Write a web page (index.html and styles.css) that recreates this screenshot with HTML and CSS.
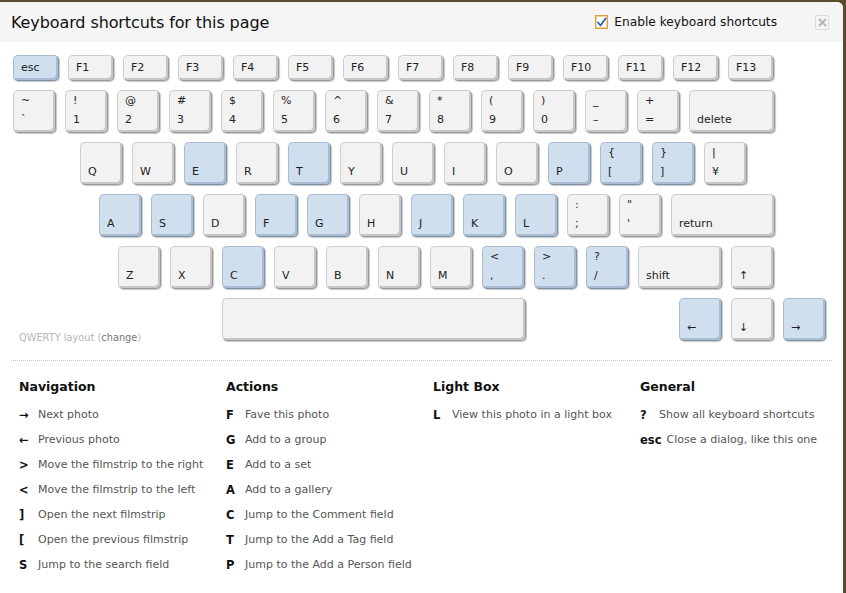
FILE: index.html
```html
<!DOCTYPE html>
<html>
<head>
<meta charset="utf-8">
<title>Keyboard shortcuts</title>
<link rel="stylesheet" href="styles.css">
</head>
<body>
<div class="dialog">
  <div class="header">
    <h1 class="title">Keyboard shortcuts for this page</h1>
    <label class="enable"><span class="checkbox"><svg width="11" height="11" viewBox="0 0 11 11"><path d="M2 5.5 L4.5 8.5 L9.5 1.5" fill="none" stroke="#2f5fb8" stroke-width="1.8" stroke-linecap="round" stroke-linejoin="round"/></svg></span>Enable keyboard shortcuts</label>
    <span class="close"><svg width="9" height="9" viewBox="0 0 9 9"><path d="M1 1 L8 8 M8 1 L1 8" stroke="#b5b5b5" stroke-width="2"/></svg></span>
  </div>

  <div class="keyboard">
    <div class="row row-fn">
      <div class="key fn hl">esc</div>
      <div class="key fn">F1</div>
      <div class="key fn">F2</div>
      <div class="key fn">F3</div>
      <div class="key fn">F4</div>
      <div class="key fn">F5</div>
      <div class="key fn">F6</div>
      <div class="key fn">F7</div>
      <div class="key fn">F8</div>
      <div class="key fn">F9</div>
      <div class="key fn">F10</div>
      <div class="key fn">F11</div>
      <div class="key fn">F12</div>
      <div class="key fn">F13</div>
    </div>
    <div class="row row-num">
      <div class="key"><span>~</span><span>`</span></div>
      <div class="key"><span>!</span><span>1</span></div>
      <div class="key"><span>@</span><span>2</span></div>
      <div class="key"><span>#</span><span>3</span></div>
      <div class="key"><span>$</span><span>4</span></div>
      <div class="key"><span>%</span><span>5</span></div>
      <div class="key"><span>^</span><span>6</span></div>
      <div class="key"><span>&amp;</span><span>7</span></div>
      <div class="key"><span>*</span><span>8</span></div>
      <div class="key"><span>(</span><span>9</span></div>
      <div class="key"><span>)</span><span>0</span></div>
      <div class="key"><span>_</span><span>–</span></div>
      <div class="key"><span>+</span><span>=</span></div>
      <div class="key k-delete"><span>delete</span></div>
    </div>
    <div class="row row-q">
      <div class="key"><span>Q</span></div>
      <div class="key"><span>W</span></div>
      <div class="key hl"><span>E</span></div>
      <div class="key"><span>R</span></div>
      <div class="key hl"><span>T</span></div>
      <div class="key"><span>Y</span></div>
      <div class="key"><span>U</span></div>
      <div class="key"><span>I</span></div>
      <div class="key"><span>O</span></div>
      <div class="key hl"><span>P</span></div>
      <div class="key hl"><span>{</span><span>[</span></div>
      <div class="key hl"><span>}</span><span>]</span></div>
      <div class="key"><span>|</span><span>¥</span></div>
    </div>
    <div class="row row-a">
      <div class="key hl"><span>A</span></div>
      <div class="key hl"><span>S</span></div>
      <div class="key"><span>D</span></div>
      <div class="key hl"><span>F</span></div>
      <div class="key hl"><span>G</span></div>
      <div class="key"><span>H</span></div>
      <div class="key hl"><span>J</span></div>
      <div class="key hl"><span>K</span></div>
      <div class="key hl"><span>L</span></div>
      <div class="key"><span>:</span><span>;</span></div>
      <div class="key"><span>"</span><span>'</span></div>
      <div class="key k-return"><span>return</span></div>
    </div>
    <div class="row row-z">
      <div class="key"><span>Z</span></div>
      <div class="key"><span>X</span></div>
      <div class="key hl"><span>C</span></div>
      <div class="key"><span>V</span></div>
      <div class="key"><span>B</span></div>
      <div class="key"><span>N</span></div>
      <div class="key"><span>M</span></div>
      <div class="key hl"><span>&lt;</span><span>,</span></div>
      <div class="key hl"><span>&gt;</span><span>.</span></div>
      <div class="key hl"><span>?</span><span>/</span></div>
      <div class="key k-shift"><span>shift</span></div>
      <div class="key"><span>↑</span></div>
    </div>
    <div class="row row-space">
      <div class="layout-note">QWERTY layout (<span class="change">change</span>)</div>
      <div class="key k-space"></div>
      <div class="arrows">
        <div class="key hl"><span>←</span></div>
        <div class="key"><span>↓</span></div>
        <div class="key hl"><span>→</span></div>
      </div>
    </div>
  </div>

  <div class="legend">
    <div class="col">
      <h2>Navigation</h2>
      <ul>
        <li><b>→</b>Next photo</li>
        <li><b>←</b>Previous photo</li>
        <li><b>&gt;</b>Move the filmstrip to the right</li>
        <li><b>&lt;</b>Move the filmstrip to the left</li>
        <li><b>]</b>Open the next filmstrip</li>
        <li><b>[</b>Open the previous filmstrip</li>
        <li><b>S</b>Jump to the search field</li>
      </ul>
    </div>
    <div class="col">
      <h2>Actions</h2>
      <ul>
        <li><b>F</b>Fave this photo</li>
        <li><b>G</b>Add to a group</li>
        <li><b>E</b>Add to a set</li>
        <li><b>A</b>Add to a gallery</li>
        <li><b>C</b>Jump to the Comment field</li>
        <li><b>T</b>Jump to the Add a Tag field</li>
        <li><b>P</b>Jump to the Add a Person field</li>
      </ul>
    </div>
    <div class="col">
      <h2>Light Box</h2>
      <ul>
        <li><b>L</b>View this photo in a light box</li>
      </ul>
    </div>
    <div class="col">
      <h2>General</h2>
      <ul>
        <li><b>?</b>Show all keyboard shortcuts</li>
        <li><b>esc</b>Close a dialog, like this one</li>
      </ul>
    </div>
  </div>
</div>
</body>
</html>
```

FILE: styles.css
```css
html, body {
  margin: 0;
  padding: 0;
  height: 100%;
  overflow: hidden;
}
body {
  background: #5b4a2b;
  font-family: "DejaVu Sans", "Liberation Sans", sans-serif;
  color: #222;
}
.dialog {
  margin-top: 2px;
  width: 843px;
  height: 620px;
  background: #fff;
  border-top-right-radius: 6px;
  overflow: hidden;
}
.header {
  display: flex;
  align-items: center;
  height: 40px;
  background: #f5f5f5;
}
.title {
  flex: 1;
  margin: 0;
  padding-left: 11px;
  font-size: 16px;
  letter-spacing: -0.1px;
  font-weight: normal;
  color: #111;
}
.enable {
  display: flex;
  align-items: center;
  font-size: 12.2px;
  color: #111;
}
.checkbox {
  box-sizing: border-box;
  width: 13px;
  height: 14px;
  margin-right: 6px;
  border: 1px solid #d7a23d;
  box-shadow: inset 0 0 0 1px #f1d49a;
  background: #fff;
  display: flex;
  align-items: center;
  justify-content: center;
}
.close {
  box-sizing: border-box;
  width: 14px;
  height: 15px;
  margin-left: 38px;
  margin-right: 14px;
  border: 1px solid #dcdcdc;
  border-radius: 2px;
  display: flex;
  align-items: center;
  justify-content: center;
}

/* keyboard */
.keyboard {
  padding: 13px 0 0 13px;
}
.row {
  display: flex;
  gap: 9px;
  margin-bottom: 9px;
}
.row-q { margin-left: 67px; }
.row-a { margin-left: 86px; }
.row-z { margin-left: 105px; }
.key {
  box-sizing: border-box;
  width: 43px;
  height: 43px;
  flex: none;
  border: 1px solid #cdcdcd;
  border-right-color: #999;
  border-bottom-color: #999;
  border-radius: 5px;
  background: #f2f2f2;
  box-shadow: inset -2px -2px 0 #c6c6c6, 1px 1px 1px rgba(0,0,0,.22);
  display: flex;
  flex-direction: column;
  justify-content: flex-end;
  padding: 0 0 3px 7px;
  font-size: 11px;
  line-height: 19px;
  color: #222;
}
.key.hl {
  background: #cfdfee;
  border-color: #aabbd0;
  border-right-color: #7f93a8;
  border-bottom-color: #7f93a8;
  box-shadow: inset -2px -2px 0 #a9bdd2, 1px 1px 1px rgba(0,0,0,.22);
}
.key.fn {
  width: 46px;
  height: 26px;
  justify-content: center;
  padding: 0 0 1px 7px;
  line-height: 16px;
}
.k-delete { width: 86px; }
.k-return { width: 104px; }
.k-shift { width: 84px; }
.k-space { width: 304px; }
.layout-note {
  box-sizing: border-box;
  width: 200px;
  align-self: flex-end;
  padding: 0 0 0 6px;
  margin-bottom: -2px;
  font-size: 9.8px;
  color: #b5b5b5;
  flex: none;
}
.change { color: #777; }
.arrows {
  display: flex;
  gap: 9px;
  margin-left: 144px;
}

/* legend */
.legend {
  display: flex;
  margin: 19px 11px 0 11px;
  padding: 18px 0 0 8px;
  border-top: 1px dotted #c4c4c4;
}
.col {
  width: 207px;
  flex: none;
}
.col h2 {
  margin: 0 0 12px;
  font-size: 12.5px;
  font-weight: bold;
  color: #111;
  line-height: 16px;
}
.col ul {
  list-style: none;
  margin: 0;
  padding: 0;
}
.col li {
  display: flex;
  height: 25px;
  line-height: 16px;
  font-size: 11px;
  color: #555;
  white-space: nowrap;
}
.col li b {
  min-width: 14px;
  margin-right: 5px;
  font-size: 11.5px;
  color: #111;
  font-weight: bold;
}
```
